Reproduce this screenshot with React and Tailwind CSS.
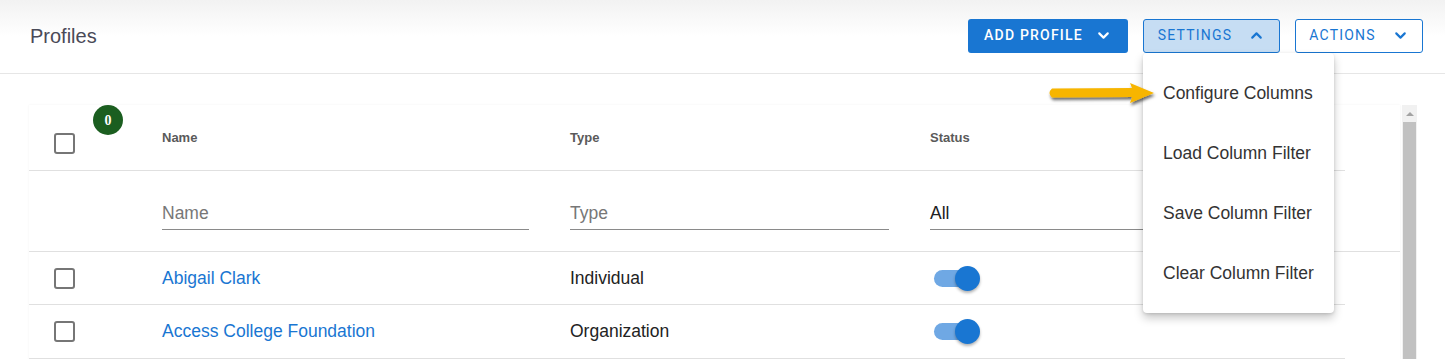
import React from 'react';
import { ChevronDown, ChevronUp } from 'lucide-react';

const rows = [
  { name: 'Abigail Clark', type: 'Individual', h: 'h-[53px]' },
  { name: 'Access College Foundation', type: 'Organization', h: 'h-[54px]' },
];

function Checkbox() {
  return <div className="w-[21px] h-[21px] border-2 border-[#767676] rounded-[3px] bg-white" />;
}

function Toggle() {
  return (
    <div className="relative w-[48px] h-[25px] flex items-center">
      <div className="w-[44px] h-[17px] rounded-full bg-[#6fa8e4] ml-[2px]" />
      <div className="absolute right-0 top-0 w-[25px] h-[25px] rounded-full bg-[#1976d2] shadow-[0_2px_3px_rgba(0,0,0,0.3)]" />
    </div>
  );
}

function FilterInput({ placeholder, value, width }) {
  return (
    <div className={`${width} border-b border-[#8a8a8a] pb-[3px] mt-[8px]`}>
      <span className={value ? 'text-[#222]' : 'text-[#777]'}>{value || placeholder}</span>
    </div>
  );
}

export default function App() {
  const cols = 'grid grid-cols-[133px_408px_360px_415px]';
  return (
    <div className="relative w-[1445px] h-[359px] overflow-hidden bg-white font-['Liberation_Sans',Arial,sans-serif]">
      {/* header */}
      <div className="h-[74px] flex items-center justify-between pl-[30px] pr-[22px] border-b border-[#e6e6e6] bg-gradient-to-b from-[#f2f2f2] via-white to-white">
        <h1 className="text-[20px] text-[#4a4a58] -mt-[2px]">Profiles</h1>
        <div className="flex items-center gap-[15px] font-['Roboto',sans-serif] text-[14px] tracking-[1.2px] -mt-[2px]">
          <button className="h-[34px] w-[160px] flex items-center justify-center gap-[12px] bg-[#1976d2] text-white rounded-[3px] font-medium">
            ADD PROFILE <ChevronDown size={17} strokeWidth={3} />
          </button>
          <button className="h-[34px] w-[137px] flex items-center justify-center gap-[16px] bg-[#c6ddf3] text-[#1976d2] border border-[#1976d2] rounded-[3px]">
            SETTINGS <ChevronUp size={17} strokeWidth={3} />
          </button>
          <button className="h-[34px] w-[128px] flex items-center justify-center gap-[16px] bg-white text-[#1976d2] border border-[#1976d2] rounded-[3px]">
            ACTIONS <ChevronDown size={17} strokeWidth={3} />
          </button>
        </div>
      </div>

      {/* table card */}
      <div className="flex pl-[29px] pt-[31px]">
        <div className="w-[1371px] bg-white shadow-[0_0_2px_rgba(0,0,0,0.06)] text-[17.5px]">
          <div className={`${cols} h-[66px] w-[1316px] border-b border-[#e0e0e0]`}>
            <div className="relative pl-[25px] pt-[28px]">
              <Checkbox />
              <div className="absolute left-[64px] top-0 w-[30px] h-[30px] rounded-full bg-[#1b5e20] flex items-center justify-center text-white text-[14px] font-bold font-['Liberation_Serif',serif]">0</div>
            </div>
            {['Name', 'Type', 'Status'].map((h) => (
              <div key={h} className="pt-[23px] text-[13px] font-bold text-[#5a5a5a]">{h}</div>
            ))}
          </div>
          <div className={`${cols} h-[81px] border-b border-[#e0e0e0] items-center`}>
            <div />
            <FilterInput placeholder="Name" width="w-[367px]" />
            <FilterInput placeholder="Type" width="w-[319px]" />
            <FilterInput value="All" width="w-[374px]" />
          </div>
          {rows.map((r) => (
            <div key={r.name} className={`${cols} w-[1316px] ${r.h} border-b border-[#e0e0e0] items-center`}>
              <div className="pl-[25px]"><Checkbox /></div>
              <div className="text-[#1976d2]">{r.name}</div>
              <div className="text-[#222]">{r.type}</div>
              <div className="pl-[2px]"><Toggle /></div>
            </div>
          ))}
        </div>
        <div className="ml-[2px] w-[15px] h-[260px] bg-[#f1f1f1] flex flex-col items-center">
          <div className="h-[17px] flex items-center justify-center">
            <div className="w-0 h-0 border-l-[4px] border-r-[4px] border-b-[4px] border-l-transparent border-r-transparent border-b-[#a3a3a3]" />
          </div>
          <div className="w-[13px] flex-1 bg-[#c1c1c1]" />
        </div>
      </div>

      {/* settings menu */}
      <div className="absolute left-[1143px] top-[53px] w-[191px] h-[260px] bg-white rounded-[4px] shadow-[0_5px_10px_rgba(0,0,0,0.22),0_1px_3px_rgba(0,0,0,0.12)] py-[10px] text-[17.5px] text-[#333]">
        {['Configure Columns', 'Load Column Filter', 'Save Column Filter', 'Clear Column Filter'].map((m) => (
          <div key={m} className="h-[60px] flex items-center pl-[20px] whitespace-nowrap">{m}</div>
        ))}
      </div>

      {/* callout arrow */}
      <svg className="absolute left-[1044px] top-[78px]" width="120" height="34" viewBox="0 0 120 34">
        <defs>
          <filter id="sh" x="-10%" y="-50%" width="130%" height="220%">
            <feDropShadow dx="1" dy="2.5" stdDeviation="1.5" floodColor="#000" floodOpacity="0.6" />
          </filter>
        </defs>
        <g filter="url(#sh)">
          <path d="M8 10.5 L88 10 L86 5 L110 15 L86 25 L88 19 L8 19.5 Q3 15 8 10.5 Z" fill="#f7b500" strokeLinejoin="round" />
        </g>
      </svg>
    </div>
  );
}
